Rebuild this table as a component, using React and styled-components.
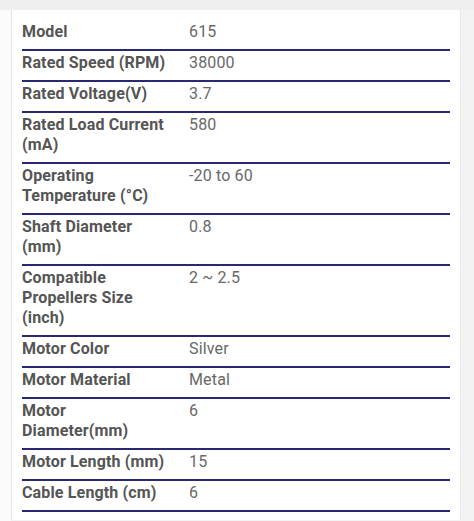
import React from 'react';
import styled, { createGlobalStyle } from 'styled-components';

const GlobalStyle = createGlobalStyle`
  html, body {
    margin: 0;
    padding: 0;
    background-color: #f3f3f3;
  }
  body {
    font-family: Roboto, "Noto Sans", "Liberation Sans", sans-serif;
  }
`;

const Page = styled.div`
  min-height: 521px;
  background-color: #f3f3f3;
  padding-left: 11px;
  box-sizing: border-box;
  background-image: linear-gradient(to right, #fbfbfb 11px, transparent 11px);
`;

const TopStrip = styled.div`
  height: 10px;
  margin-left: -11px;
  background-color: #efefef;
`;

const Card = styled.div`
  width: 450px;
  background-color: #ffffff;
  border-left: 1px solid #e6e6e6;
  border-right: 1px solid #e9e9e9;
  padding: 10px 10px 8px 10px;
  box-sizing: border-box;
`;

const Row = styled.div`
  display: grid;
  grid-template-columns: 167px 1fr;
  border-bottom: 2px solid #2b2872;
  padding: 2px 0 7px;
  line-height: 20px;
  font-size: 16px;
  letter-spacing: 0.15px;
`;

const Label = styled.div`
  font-weight: 700;
  color: #555555;
  padding-right: 15px;
`;

const Value = styled.div`
  font-weight: 400;
  color: #686868;
`;

const specs = [
  ['Model', '615'],
  ['Rated Speed (RPM)', '38000'],
  ['Rated Voltage(V)', '3.7'],
  ['Rated Load Current (mA)', '580'],
  ['Operating Temperature (°C)', '-20 to 60'],
  ['Shaft Diameter (mm)', '0.8'],
  ['Compatible Propellers Size (inch)', '2 ~ 2.5'],
  ['Motor Color', 'Silver'],
  ['Motor Material', 'Metal'],
  ['Motor Diameter(mm)', '6'],
  ['Motor Length (mm)', '15'],
  ['Cable Length (cm)', '6'],
];

export default function App() {
  return (
    <>
      <GlobalStyle />
      <Page>
        <TopStrip />
        <Card>
          {specs.map(([label, value]) => (
            <Row key={label}>
              <Label>{label}</Label>
              <Value>{value}</Value>
            </Row>
          ))}
        </Card>
      </Page>
    </>
  );
}
